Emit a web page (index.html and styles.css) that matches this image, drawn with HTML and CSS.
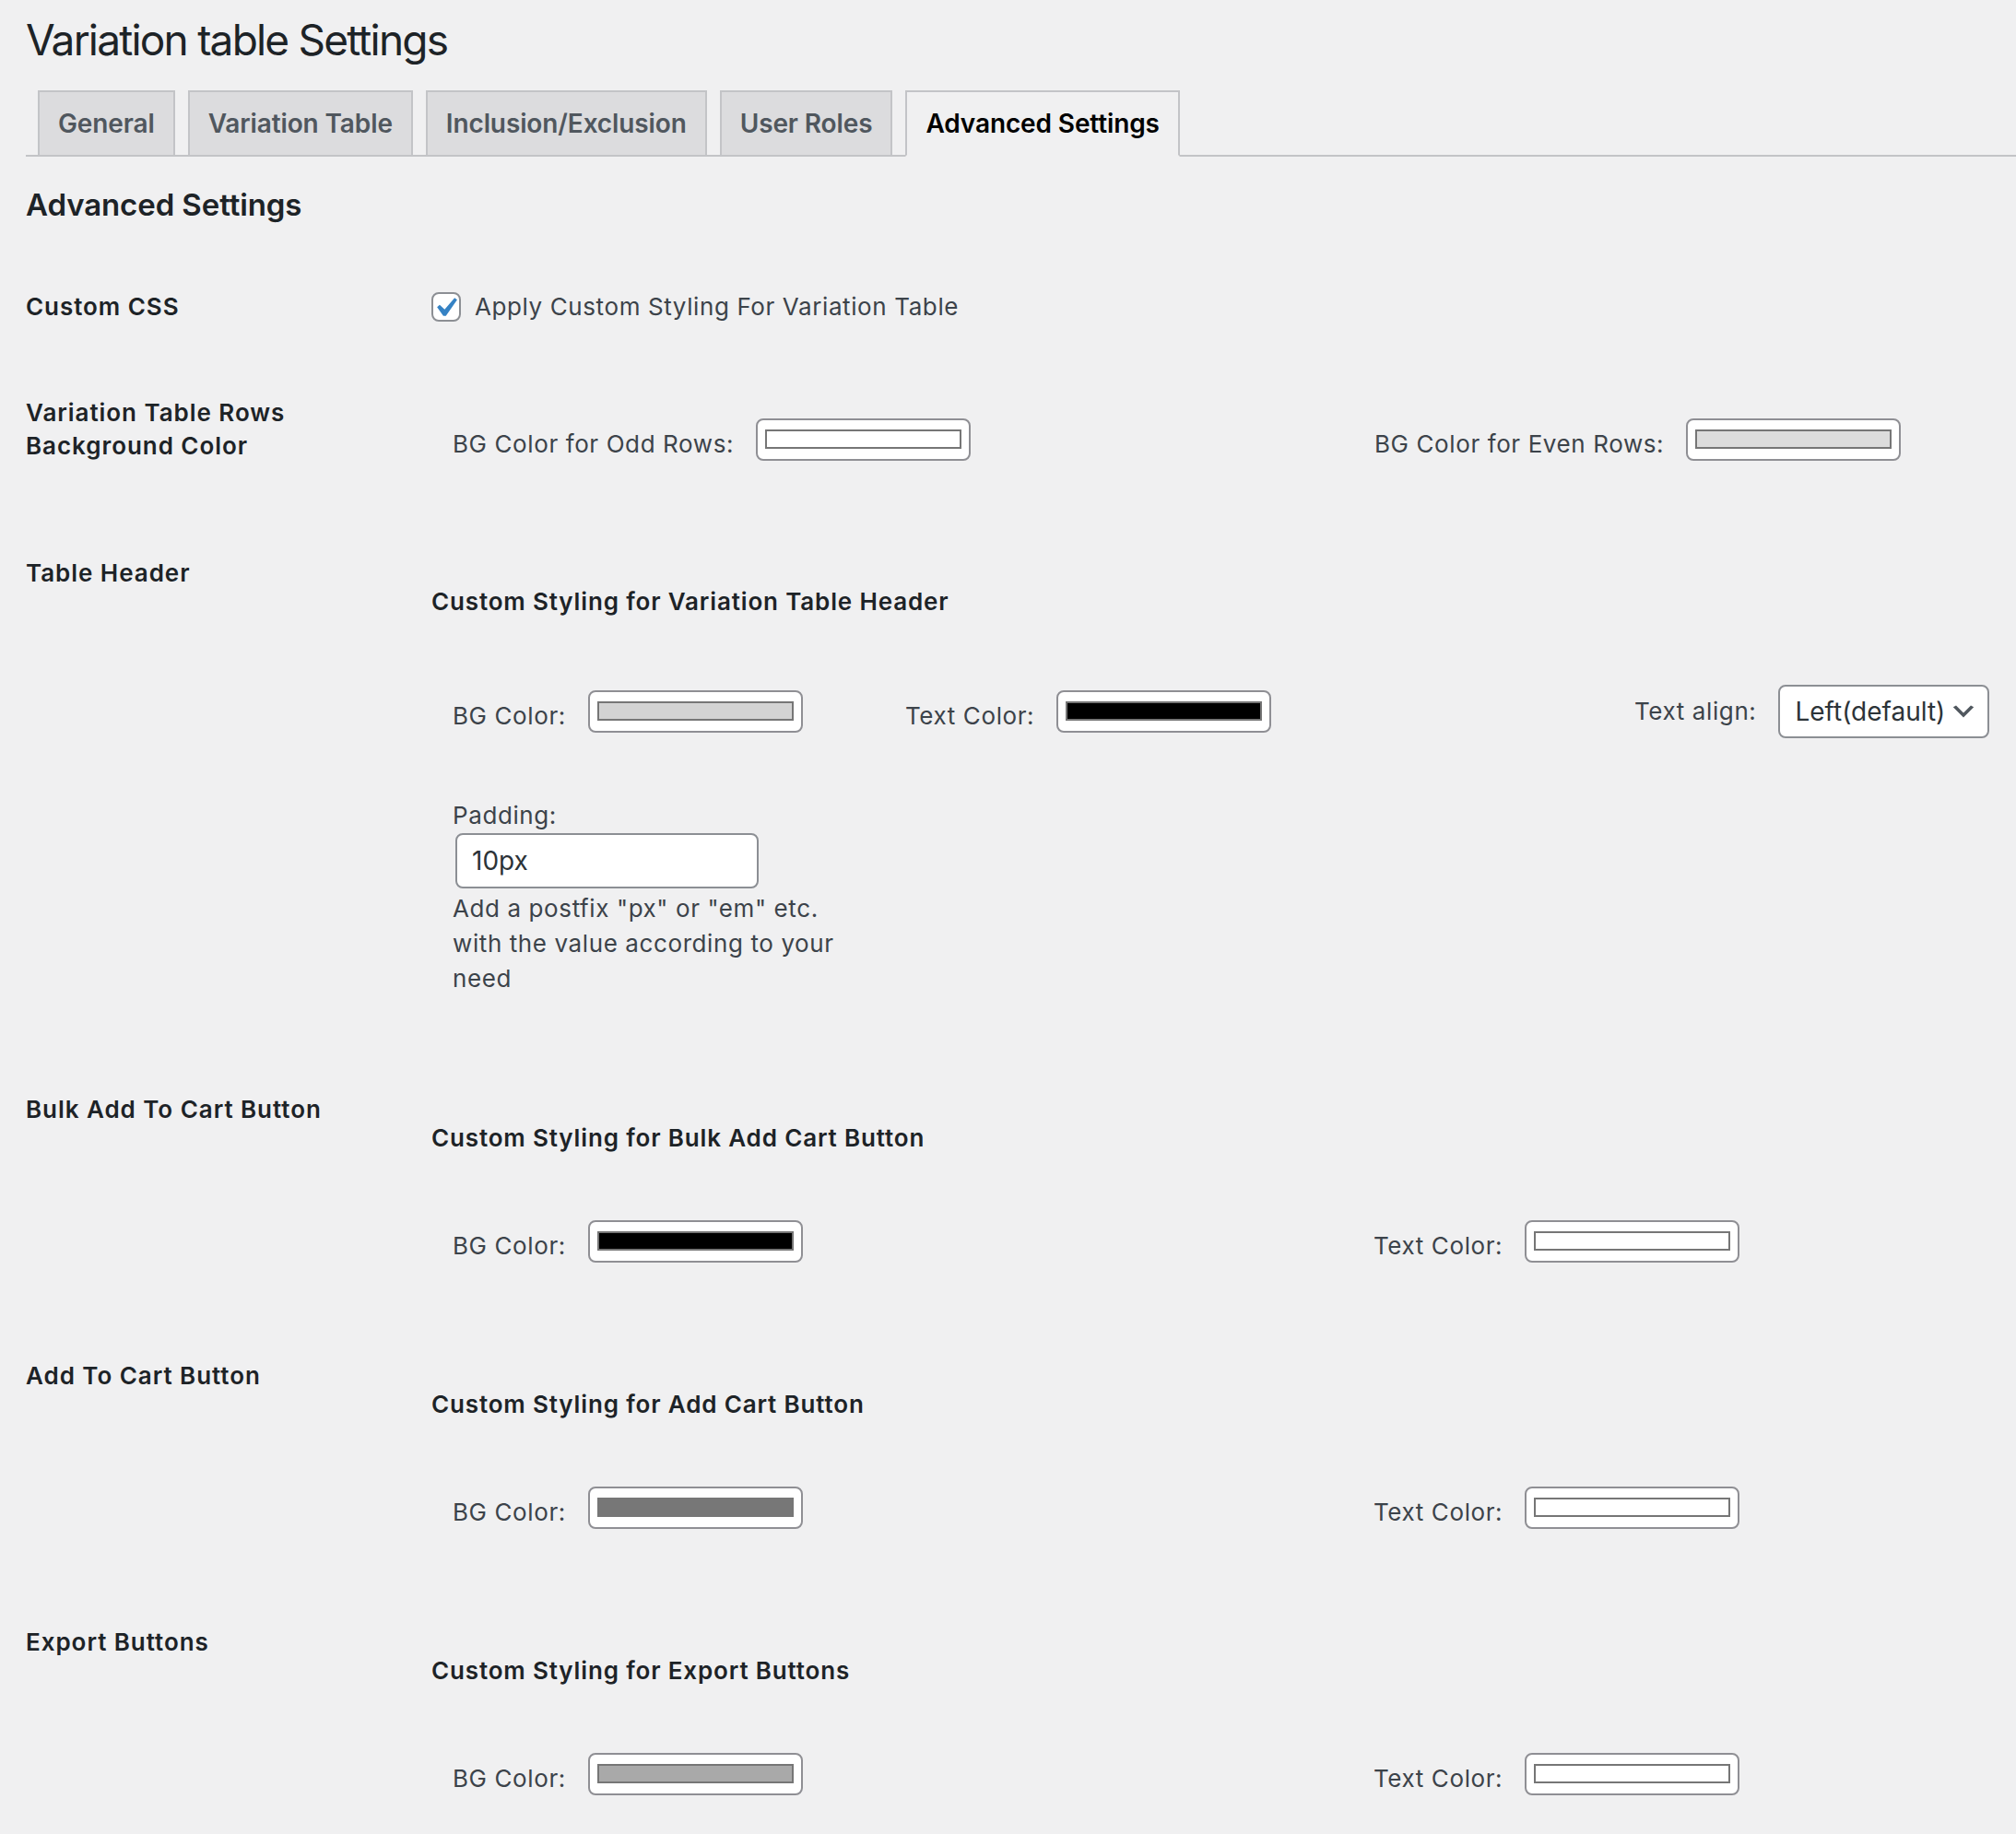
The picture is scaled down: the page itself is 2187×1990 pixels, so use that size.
FILE: index.html
```html
<!DOCTYPE html>
<html lang="en">
<head>
<meta charset="utf-8">
<title>Variation table Settings</title>
<link rel="stylesheet" href="styles.css">
</head>
<body>
<div class="wrap">
  <h1 class="page-title">Variation table Settings</h1>
  <nav class="nav-tabs">
    <a class="nav-tab">General</a>
    <a class="nav-tab">Variation Table</a>
    <a class="nav-tab">Inclusion/Exclusion</a>
    <a class="nav-tab">User Roles</a>
    <a class="nav-tab is-active">Advanced Settings</a>
  </nav>

  <h2 class="section-title">Advanced Settings</h2>

  <div class="form-rows">
    <div class="row row-first">
      <div class="row-label">Custom CSS</div>
      <div class="row-field">
        <label class="check-label">
          <span class="checkbox"><svg viewBox="3.81 2.857 13.333 13.333" width="28" height="28"><path d="M14.83 4.89l1.34.94-5.81 8.38H9.02L5.78 9.67l1.34-1.250 2.57 2.4z" fill="#3582c4"/></svg></span>
          <span>Apply Custom Styling For Variation Table</span>
        </label>
      </div>
    </div>

    <div class="row row-second">
      <div class="row-label">Variation Table Rows Background Color</div>
      <div class="row-field">
        <div class="pairs pairs-top">
          <div class="cgroup cgroup-half">
            <span class="clabel">BG Color for Odd Rows:</span>
            <span class="color-box"><span class="swatch sw-white"></span></span>
          </div>
          <div class="cgroup">
            <span class="clabel">BG Color for Even Rows:</span>
            <span class="color-box"><span class="swatch sw-even"></span></span>
          </div>
        </div>
      </div>
    </div>

    <div class="row row-header">
      <div class="row-label">Table Header</div>
      <div class="row-field">
        <div class="sub-title">Custom Styling for Variation Table Header</div>
        <div class="pairs pairs-header">
          <div class="cgroup cgroup-first">
            <span class="clabel">BG Color:</span>
            <span class="color-box"><span class="swatch sw-light"></span></span>
          </div>
          <div class="cgroup cgroup-second">
            <span class="clabel">Text Color:</span>
            <span class="color-box"><span class="swatch sw-black"></span></span>
          </div>
          <div class="cgroup">
            <span class="clabel clabel-plain">Text align:</span>
            <div class="select">
              <span>Left(default)</span>
              <svg viewBox="0 0 20 20" width="32" height="32"><path d="M5 6l5 5 5-5 2 1-7 7-7-7 2-1z" fill="#50575e"/></svg>
            </div>
          </div>
        </div>
        <div class="padding-field">
          <div class="field-label">Padding:</div>
          <div class="text-input">10px</div>
          <p class="help">Add a postfix "px" or "em" etc. with the value according to your need</p>
        </div>
      </div>
    </div>

    <div class="row">
      <div class="row-label">Bulk Add To Cart Button</div>
      <div class="row-field">
        <div class="sub-title">Custom Styling for Bulk Add Cart Button</div>
        <div class="pairs">
          <div class="cgroup cgroup-wide">
            <span class="clabel">BG Color:</span>
            <span class="color-box"><span class="swatch sw-black"></span></span>
          </div>
          <div class="cgroup">
            <span class="clabel">Text Color:</span>
            <span class="color-box"><span class="swatch sw-white"></span></span>
          </div>
        </div>
      </div>
    </div>

    <div class="row">
      <div class="row-label">Add To Cart Button</div>
      <div class="row-field">
        <div class="sub-title">Custom Styling for Add Cart Button</div>
        <div class="pairs">
          <div class="cgroup cgroup-wide">
            <span class="clabel">BG Color:</span>
            <span class="color-box"><span class="swatch sw-gray"></span></span>
          </div>
          <div class="cgroup">
            <span class="clabel">Text Color:</span>
            <span class="color-box"><span class="swatch sw-white"></span></span>
          </div>
        </div>
      </div>
    </div>

    <div class="row">
      <div class="row-label">Export Buttons</div>
      <div class="row-field">
        <div class="sub-title">Custom Styling for Export Buttons</div>
        <div class="pairs">
          <div class="cgroup cgroup-wide">
            <span class="clabel">BG Color:</span>
            <span class="color-box"><span class="swatch sw-dark"></span></span>
          </div>
          <div class="cgroup">
            <span class="clabel">Text Color:</span>
            <span class="color-box"><span class="swatch sw-white"></span></span>
          </div>
        </div>
      </div>
    </div>
  </div>
</div>
</body>
</html>
```

FILE: styles.css
```css
html, body {
  margin: 0;
  padding: 0;
  background: #f0f0f1;
}

body {
  font-family: Inter, "Liberation Sans", sans-serif;
  font-size: 26px;
  line-height: 36px;
  letter-spacing: 0.6px;
  color: #3c434a;
}

.wrap {
  padding: 13px 0 20px 28px;
}

.page-title {
  margin: 0;
  font-size: 46px;
  line-height: 60px;
  font-weight: 400;
  letter-spacing: -1.8px;
  color: #1d2327;
}

.nav-tabs {
  display: flex;
  align-items: flex-end;
  margin-top: 25px;
  border-bottom: 2px solid #c3c4c7;
}

.nav-tab {
  margin-left: 14px;
  margin-bottom: -2px;
  padding: 10px 20px;
  border: 2px solid #c3c4c7;
  background: #dcdcde;
  color: #50575e;
  font-size: 28px;
  line-height: 48px;
  font-weight: 600;
  letter-spacing: -0.12px;
  white-space: nowrap;
}

.nav-tab:first-child {
  margin-left: 13px;
}

.nav-tab.is-active {
  background: #f0f0f1;
  border-bottom-color: #f0f0f1;
  color: #000;
}

.section-title {
  margin: 31px 0 0;
  font-size: 33px;
  line-height: 42px;
  font-weight: 600;
  letter-spacing: -0.1px;
  color: #1d2327;
}

.row {
  display: flex;
  align-items: flex-start;
  margin-top: 105px;
}

.row-first {
  margin-top: 72px;
}

.row-second {
  margin-top: 79px;
}

.row-header {
  margin-top: 102px;
}

.row-label {
  width: 400px;
  padding-right: 20px;
  flex: none;
  font-weight: 600;
  letter-spacing: 0.95px;
  color: #1d2327;
}

.row-field {
  flex: 1;
  padding-left: 20px;
}

.check-label {
  display: flex;
  align-items: center;
  height: 36px;
}

.checkbox {
  box-sizing: border-box;
  width: 32px;
  height: 32px;
  margin-right: 15px;
  border: 2px solid #8c8f94;
  border-radius: 8px;
  background: #fff;
  flex: none;
}

.checkbox svg {
  display: block;
}

.sub-title {
  margin-top: 31px;
  font-weight: 600;
  letter-spacing: 0.85px;
  color: #1d2327;
}

.pairs {
  display: flex;
  align-items: center;
  padding-left: 23px;
  margin-top: 71px;
}

.pairs-top {
  margin-top: 24px;
}

.pairs-header {
  margin-top: 72px;
}

.cgroup {
  display: flex;
  align-items: center;
  flex: none;
}

.cgroup-half {
  width: 1000px;
}

.cgroup-wide {
  width: 999px;
}

.cgroup-first {
  width: 491px;
}

.cgroup-second {
  width: 791px;
}

.clabel {
  padding-top: 10px;
  margin-right: 24px;
  white-space: nowrap;
}

.clabel-plain {
  padding-top: 0;
}

.color-box {
  box-sizing: border-box;
  display: block;
  width: 233px;
  height: 46px;
  padding: 10px 8px 11px;
  border: 2px solid #8f8f94;
  border-radius: 8px;
  background: #fff;
}

.swatch {
  box-sizing: border-box;
  display: block;
  height: 100%;
  border: 2px solid #767676;
}

.sw-white { background: #ffffff; }
.sw-even { background: #dcdcdc; }
.sw-light { background: #d3d3d3; }
.sw-black { background: #000000; }
.sw-gray { background: #777777; }
.sw-dark { background: #a9a9a9; }

.select {
  box-sizing: border-box;
  display: flex;
  align-items: center;
  justify-content: space-between;
  width: 229px;
  height: 58px;
  padding: 0 10px 0 16px;
  border: 2px solid #8c8f94;
  border-radius: 8px;
  background: #fff;
  color: #2c3338;
  font-size: 28px;
  letter-spacing: 0;
}

.select svg {
  display: block;
  flex: none;
}

.padding-field {
  padding-left: 23px;
  margin-top: 66px;
}

.text-input {
  box-sizing: border-box;
  width: 329px;
  height: 60px;
  margin: 1px 0 0 3px;
  padding: 0 16px;
  border: 2px solid #8c8f94;
  border-radius: 8px;
  background: #fff;
  color: #2c3338;
  font-size: 28px;
  line-height: 56px;
  letter-spacing: 0;
}

.help {
  width: 430px;
  margin: 3px 0 0;
  line-height: 38px;
}
```
